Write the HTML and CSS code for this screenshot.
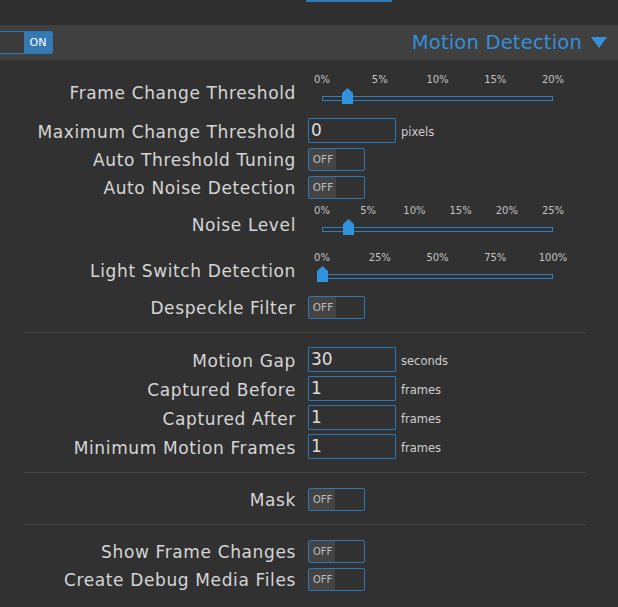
FILE: index.html
```html
<!DOCTYPE html>
<html>
<head>
<meta charset="utf-8">
<link rel="stylesheet" href="styles.css">
</head>
<body>
<div class="page">
  <div class="top-stub"><div class="stub-line"></div></div>

  <div class="section-header">
    <div class="toggle toggle-on">
      <span class="toggle-track"></span>
      <span class="toggle-on-part">ON</span>
    </div>
    <div class="section-title">
      <span>Motion Detection</span>
      <svg class="caret" width="16" height="12" viewBox="0 0 16 12"><polygon points="0,0 16,0 8,11" fill="#3590d8"/></svg>
    </div>
  </div>

  <div class="section-body">
    <div class="row row-slider r1">
      <div class="label">Frame Change Threshold</div>
      <div class="slider">
        <div class="ticks">
          <span class="tick" style="left:0%">0%</span>
          <span class="tick" style="left:25%">5%</span>
          <span class="tick" style="left:50%">10%</span>
          <span class="tick" style="left:75%">15%</span>
          <span class="tick" style="left:100%">20%</span>
        </div>
        <div class="track">
          <svg class="thumb" style="left:11%" width="11" height="16" viewBox="0 0 11 16"><polygon points="0,5 5.5,0 11,5 11,16 0,16" fill="#3193dc"/></svg>
        </div>
      </div>
    </div>

    <div class="row row-input">
      <div class="label">Maximum Change Threshold</div>
      <div class="control"><div class="num-input">0</div><span class="unit">pixels</span></div>
    </div>

    <div class="row row-toggle">
      <div class="label">Auto Threshold Tuning</div>
      <div class="control"><div class="toggle"><span class="toggle-off-part">OFF</span></div></div>
    </div>

    <div class="row row-toggle">
      <div class="label">Auto Noise Detection</div>
      <div class="control"><div class="toggle"><span class="toggle-off-part">OFF</span></div></div>
    </div>

    <div class="row row-slider r5">
      <div class="label">Noise Level</div>
      <div class="slider">
        <div class="ticks">
          <span class="tick" style="left:0%">0%</span>
          <span class="tick" style="left:20%">5%</span>
          <span class="tick" style="left:40%">10%</span>
          <span class="tick" style="left:60%">15%</span>
          <span class="tick" style="left:80%">20%</span>
          <span class="tick" style="left:100%">25%</span>
        </div>
        <div class="track">
          <svg class="thumb" style="left:11.5%" width="11" height="16" viewBox="0 0 11 16"><polygon points="0,5 5.5,0 11,5 11,16 0,16" fill="#3193dc"/></svg>
        </div>
      </div>
    </div>

    <div class="row row-slider r6">
      <div class="label">Light Switch Detection</div>
      <div class="slider">
        <div class="ticks">
          <span class="tick" style="left:0%">0%</span>
          <span class="tick" style="left:25%">25%</span>
          <span class="tick" style="left:50%">50%</span>
          <span class="tick" style="left:75%">75%</span>
          <span class="tick" style="left:100%">100%</span>
        </div>
        <div class="track">
          <svg class="thumb" style="left:0%" width="11" height="16" viewBox="0 0 11 16"><polygon points="0,5 5.5,0 11,5 11,16 0,16" fill="#3193dc"/></svg>
        </div>
      </div>
    </div>

    <div class="row row-toggle">
      <div class="label">Despeckle Filter</div>
      <div class="control"><div class="toggle"><span class="toggle-off-part">OFF</span></div></div>
    </div>

    <div class="divider"></div>

    <div class="row row-input">
      <div class="label">Motion Gap</div>
      <div class="control"><div class="num-input">30</div><span class="unit">seconds</span></div>
    </div>
    <div class="row row-input">
      <div class="label">Captured Before</div>
      <div class="control"><div class="num-input">1</div><span class="unit">frames</span></div>
    </div>
    <div class="row row-input">
      <div class="label">Captured After</div>
      <div class="control"><div class="num-input">1</div><span class="unit">frames</span></div>
    </div>
    <div class="row row-input">
      <div class="label">Minimum Motion Frames</div>
      <div class="control"><div class="num-input">1</div><span class="unit">frames</span></div>
    </div>

    <div class="divider"></div>

    <div class="row row-toggle">
      <div class="label">Mask</div>
      <div class="control"><div class="toggle toggle-narrow"><span class="toggle-off-part">OFF</span></div></div>
    </div>

    <div class="divider"></div>

    <div class="row row-toggle">
      <div class="label">Show Frame Changes</div>
      <div class="control"><div class="toggle toggle-narrow"><span class="toggle-off-part">OFF</span></div></div>
    </div>
    <div class="row row-toggle">
      <div class="label">Create Debug Media Files</div>
      <div class="control"><div class="toggle toggle-narrow"><span class="toggle-off-part">OFF</span></div></div>
    </div>
  </div>
</div>
</body>
</html>
```

FILE: styles.css
```css
* { box-sizing: border-box; }
html, body {
  margin: 0;
  padding: 0;
  background: #313131;
}
body {
  font-family: "DejaVu Sans", sans-serif;
  color: #d6d6d6;
  width: 618px;
  height: 607px;
  overflow: hidden;
}
.page { width: 618px; }

.top-stub {
  height: 25px;
  background: #2f2f2f;
  padding-left: 306px;
}
.stub-line {
  width: 86px;
  height: 2px;
  background: #2f7ab6;
}

.section-header {
  height: 35px;
  background: #404040;
  display: flex;
  align-items: center;
  justify-content: space-between;
  padding-right: 11px;
}

.toggle {
  width: 57px;
  height: 23px;
  border: 1px solid #2d78b4;
  border-radius: 2px;
  display: flex;
  overflow: hidden;
  background: #313131;
}
.toggle-off-part {
  width: 27px;
  background: #444444;
  color: #bdbdbd;
  font-size: 10.5px;
  display: flex;
  align-items: center;
  justify-content: center;
  padding-left: 1px;
}
.toggle-narrow .toggle-off-part {
  font-family: "DejaVu Sans Condensed", "DejaVu Sans", sans-serif;
  font-stretch: condensed;
  font-size: 11px;
  width: 26px;
}

.toggle-on {
  margin-left: -4px;
  margin-top: -1px;
  background: #3a3a3a;
}
.toggle-track {
  flex: 1;
}
.toggle-on-part {
  width: 28px;
  background: #3479b1;
  color: #ffffff;
  font-size: 11px;
  display: flex;
  align-items: center;
  justify-content: center;
}

.section-title {
  display: flex;
  align-items: center;
  gap: 9px;
  color: #3590d8;
  font-size: 19.5px;
  letter-spacing: 0.2px;
}
.caret { margin-top: 1px; }

.section-body {
  padding-top: 8px;
}

.row {
  display: grid;
  grid-template-columns: 296px auto;
  column-gap: 12px;
  align-items: center;
}
.label {
  text-align: right;
  font-size: 17px;
  letter-spacing: 0.63px;
  color: #d6d6d6;
  white-space: nowrap;
  padding-top: 2px;
}
.row-input { height: 29px; }
.row-toggle { height: 28px; }

.row-slider { align-items: start; }
.row-slider .label { align-self: center; }
.r1 { height: 48px; }
.r1 .slider { padding-top: 6px; }
.r5 { height: 46px; }
.r5 .slider { padding-top: 4px; }
.r6 { height: 46px; }
.r6 .slider { padding-top: 5px; }

.control {
  display: flex;
  align-items: center;
  gap: 5px;
}

.slider {
  width: 260px;
  padding-left: 14px;
}
.ticks {
  position: relative;
  width: 231px;
  height: 12px;
}
.tick {
  position: absolute;
  top: 0;
  transform: translateX(-50%);
  font-size: 10px;
  line-height: 12px;
  color: #c2c2c2;
  white-space: nowrap;
}
.track {
  position: relative;
  margin-top: 10px;
  width: 231px;
  height: 5px;
  border: 1px solid #2d7fc0;
  background: #313131;
}
.thumb {
  position: absolute;
  top: -9px;
  margin-left: -6px;
}

.num-input {
  width: 88px;
  height: 25px;
  border: 1px solid #2a78b8;
  border-radius: 1px;
  font-size: 17px;
  line-height: 23px;
  padding-left: 2px;
  color: #dcdcdc;
}
.unit {
  font-size: 11.5px;
  color: #cfcfcf;
  padding-top: 2px;
}

.divider {
  height: 1px;
  background: #454545;
  margin: 11px 32px 12px 24px;
}
```
